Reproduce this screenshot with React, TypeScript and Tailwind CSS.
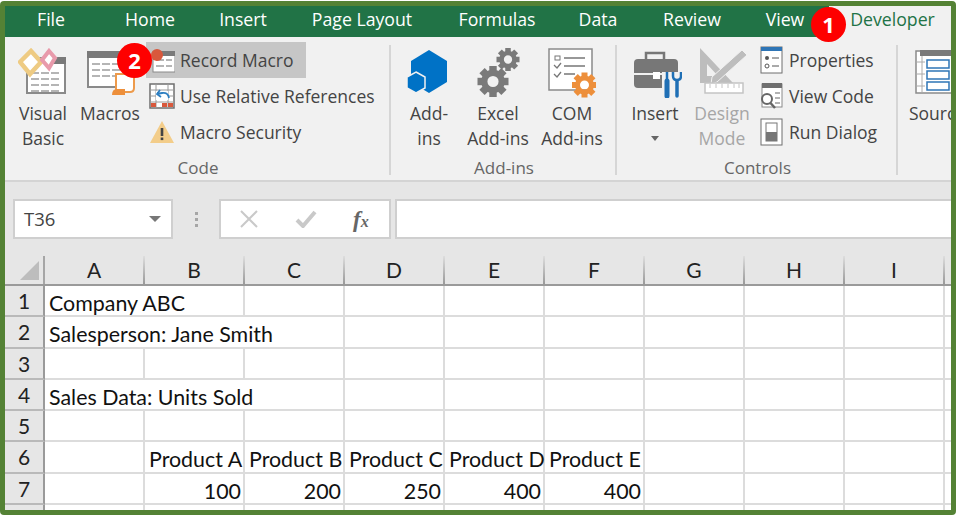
import React from "react";

const ribbonFont = { fontFamily: '"Open Sans", "Noto Sans", sans-serif' };

// tab labels with their box widths, so the centres line up with the ribbon
const tabs = [
  { label: "File", w: "w-[92px]" },
  { label: "Home", w: "w-[106px]" },
  { label: "Insert", w: "w-[80px]" },
  { label: "Page Layout", w: "w-[158px]" },
  { label: "Formulas", w: "w-[112px]" },
  { label: "Data", w: "w-[90px]" },
  { label: "Review", w: "w-[98px]" },
  { label: "View", w: "w-[88px]" },
];

function Badge({ n, className }: { n: number; className: string }) {
  return (
    <div
      className={`absolute z-10 flex h-[35px] w-[35px] items-center justify-center rounded-full bg-[#fe0000] text-[22px] font-bold text-white ${className}`}
    >
      {n}
    </div>
  );
}

function Gear({ cx, cy, r, color }: { cx: number; cy: number; r: number; color: string }) {
  const teeth = [0, 45, 90, 135, 180, 225, 270, 315];
  return (
    <g fill={color}>
      {teeth.map((a) => (
        <rect
          key={a}
          x={cx - r * 0.24}
          y={cy - r}
          width={r * 0.48}
          height={r * 0.5}
          transform={`rotate(${a} ${cx} ${cy})`}
        />
      ))}
      <circle cx={cx} cy={cy} r={r * 0.56} fill="none" stroke={color} strokeWidth={r * 0.4} />
    </g>
  );
}

function SheetLines({ x, y, w, rows }: { x: number; y: number; w: number; rows: number }) {
  return (
    <g stroke="#b5b5b5" strokeWidth="2" strokeDasharray="8 2">
      {Array.from({ length: rows }).map((_, i) => (
        <line key={i} x1={x} x2={x + w} y1={y + i * 6} y2={y + i * 6} />
      ))}
    </g>
  );
}

function VisualBasicIcon() {
  return (
    <svg width="50" height="48" viewBox="0 0 50 48">
      <rect x="9" y="10" width="38" height="35" fill="#fff" stroke="#8a8a8a" strokeWidth="2" />
      <rect x="28" y="9" width="20" height="7" fill="#7a7a7a" />
      <SheetLines x={13} y={25} w={30} rows={4} />
      <path d="M2 14 L13 3 L23 14 L12 26 Z" fill="#fff" stroke="#eecb83" strokeWidth="4.5" />
      <path d="M24 12 L31 3 L37 10 L31 20 Z" fill="#fff" stroke="#e89aab" strokeWidth="4" />
    </svg>
  );
}

function MacrosIcon() {
  return (
    <svg width="50" height="48" viewBox="0 0 50 48">
      <rect x="3" y="4" width="40" height="35" fill="#fff" stroke="#8a8a8a" strokeWidth="2" />
      <rect x="2" y="3" width="42" height="7" fill="#7a7a7a" />
      <SheetLines x={7} y={16} w={32} rows={3} />
      <path d="M31 44 H45 Q49 44 49 40 V26 H31 Z" fill="#fff" stroke="#ed9a4b" strokeWidth="2" />
      <path d="M27 47 Q27 41 32 41 H40 V47 Z" fill="#ed8f3b" />
    </svg>
  );
}

function RecordIcon() {
  return (
    <svg width="26" height="26" viewBox="0 0 26 26">
      <rect x="4" y="5" width="22" height="20" fill="#fff" stroke="#8a8a8a" />
      <rect x="4" y="4" width="22" height="5" fill="#7a7a7a" />
      <SheetLines x={7} y={13} w={16} rows={2} />
      <circle cx="8" cy="8" r="6" fill="#d9583c" />
    </svg>
  );
}

function RelativeIcon() {
  return (
    <svg width="26" height="26" viewBox="0 0 26 26">
      <rect x="1" y="1" width="24" height="24" fill="#fff" stroke="#6f6f6f" strokeWidth="1.5" />
      <path d="M1 7 H25 M1 13 H25 M1 19 H25 M7 1 V25 M19 1 V25" stroke="#9a9a9a" />
      <rect x="7" y="8" width="12" height="9" fill="#fff" />
      <rect x="2" y="20" width="5" height="4" fill="#d9583c" />
      <rect x="13" y="20" width="5" height="4" fill="#d9583c" />
      <rect x="19" y="20" width="5" height="4" fill="#d9583c" />
      <path d="M20 15 Q19 9 13 10 L8 11 M11 7 L8 11 L12 14" fill="none" stroke="#2e7fc1" strokeWidth="1.8" />
    </svg>
  );
}

function WarningIcon() {
  return (
    <svg width="26" height="26" viewBox="0 0 26 26">
      <path d="M13 2 L25 24 H1 Z" fill="#f3cd8a" />
      <rect x="11.7" y="9" width="2.6" height="8" fill="#444" />
      <rect x="11.7" y="18.5" width="2.6" height="2.6" fill="#444" />
    </svg>
  );
}

function AddInsIcon() {
  return (
    <svg width="46" height="48" viewBox="0 0 46 48">
      <path d="M23 2 L41 13 V34 L23 45 L5 34 V13 Z" fill="#0072c6" />
      <path d="M10 24 L19 29 V40 L10 45 L1 40 V29 Z" fill="#0072c6" stroke="#f1f1f1" strokeWidth="1.5" />
    </svg>
  );
}

function GearsIcon() {
  return (
    <svg width="50" height="50" viewBox="0 0 50 50">
      <Gear cx={20} cy={33.5} r={15.5} color="#7a7a7a" />
      <Gear cx={35} cy={11.5} r={11.5} color="#7a7a7a" />
    </svg>
  );
}

function ComIcon() {
  return (
    <svg width="48" height="50" viewBox="0 0 48 50">
      <rect x="1" y="1" width="43" height="41" fill="#fff" stroke="#8a8a8a" strokeWidth="1.5" />
      <rect x="7" y="8" width="5" height="4" fill="none" stroke="#777" />
      <path d="M16 10 H37 M16 18 H37 M16 26 H27" stroke="#777" strokeWidth="1.5" />
      <path d="M6 17 L9 20 L13 15 M6 26 L9 29 L13 24" fill="none" stroke="#777" strokeWidth="1.3" />
      <Gear cx={36.5} cy={37} r={12.5} color="#ed8f3b" />
    </svg>
  );
}

function ToolboxIcon() {
  return (
    <svg width="54" height="50" viewBox="0 0 54 50">
      <path d="M18 11 V5 H36 V11" fill="none" stroke="#777" strokeWidth="2.5" />
      <path d="M6 15 Q6 11 10 11 H46 Q50 11 50 15 V25 H6 Z" fill="#777" />
      <path d="M6 27 H50 V40 H10 Q6 40 6 36 Z" fill="#777" />
      <rect x="25" y="24" width="7" height="7" fill="#fff" />
      <rect x="34" y="24" width="20" height="26" fill="#f1f1f1" />
      <path d="M39 24 V35" stroke="#1f6fb5" strokeWidth="2.5" />
      <path d="M39 33 V48" stroke="#1f6fb5" strokeWidth="5" strokeLinecap="round" />
      <path d="M49 33 V48" stroke="#1f6fb5" strokeWidth="3.5" strokeLinecap="round" />
      <path d="M45 24 V28 Q45 32 49 32 Q53 32 53 28 V24" fill="none" stroke="#1f6fb5" strokeWidth="2.5" />
    </svg>
  );
}

function DesignIcon() {
  return (
    <svg width="50" height="48" viewBox="0 0 50 48">
      <path d="M3 0 L36 35 H3 Z M10 16 V28 H21 Z" fill="#bdbdbd" fillRule="evenodd" />
      <path d="M15 29 L45 2 L50 7 L20 34 L14 36 Z" fill="#bdbdbd" stroke="#f1f1f1" />
      <rect x="8" y="35" width="38" height="10" fill="#fff" stroke="#c4c4c4" strokeWidth="1.5" />
      <path d="M13 36 V40 M19 36 V40 M25 36 V40 M31 36 V40 M37 36 V40 M42 36 V40" stroke="#c4c4c4" />
    </svg>
  );
}

function PropertiesIcon() {
  return (
    <svg width="26" height="28" viewBox="0 0 26 28">
      <rect x="3" y="1" width="21" height="26" fill="#fff" stroke="#6f6f6f" />
      <rect x="3" y="1" width="21" height="4" fill="#2e75b6" />
      <circle cx="9" cy="12" r="2" fill="#555" />
      <circle cx="9" cy="20" r="2" fill="none" stroke="#555" />
      <path d="M14 12 H21 M14 20 H21" stroke="#555" />
    </svg>
  );
}

function ViewCodeIcon() {
  return (
    <svg width="26" height="28" viewBox="0 0 26 28">
      <rect x="4" y="2" width="20" height="23" fill="#fff" stroke="#8a8a8a" />
      <rect x="4" y="1" width="20" height="5" fill="#6f6f6f" />
      <path d="M17 11 H22 M17 16 H22 M17 21 H22" stroke="#666" />
      <circle cx="9" cy="17" r="5" fill="#fff" stroke="#666" strokeWidth="2" />
      <path d="M12.5 21 L17 26" stroke="#666" strokeWidth="2.5" />
    </svg>
  );
}

function RunDialogIcon() {
  return (
    <svg width="26" height="28" viewBox="0 0 26 28">
      <rect x="3" y="1" width="21" height="26" fill="#fff" stroke="#6f6f6f" />
      <rect x="8" y="5" width="11" height="18" fill="#fff" stroke="#777" />
      <rect x="8" y="14" width="11" height="9" fill="#777" />
    </svg>
  );
}

function SourceIcon() {
  return (
    <svg width="46" height="48" viewBox="0 0 46 48" className="shrink-0">
      <rect x="1" y="3" width="44" height="42" fill="#fff" stroke="#8a8a8a" strokeWidth="1.5" />
      <rect x="5" y="2" width="41" height="6" fill="#7a7a7a" />
      <path d="M1 14 H10 M1 26 H10 M1 38 H10 M7 8 V45" stroke="#aaa" />
      <rect x="12" y="12" width="22" height="8" fill="#fff" stroke="#2e75b6" strokeWidth="1.5" />
      <rect x="12" y="23" width="22" height="8" fill="#fff" stroke="#2e75b6" strokeWidth="1.5" />
      <rect x="12" y="34" width="22" height="8" fill="#fff" stroke="#2e75b6" strokeWidth="1.5" />
    </svg>
  );
}

function LargeButton({
  icon,
  lines,
  w,
  muted,
  caret,
}: {
  icon: React.ReactNode;
  lines: string[];
  w: string;
  muted?: boolean;
  caret?: boolean;
}) {
  return (
    <div className={`flex shrink-0 flex-col items-center ${w}`}>
      <div className="flex h-[59px] items-start pt-[6px]">{icon}</div>
      <div className={`whitespace-nowrap text-center leading-[25px] ${muted ? "text-[#a6a6a6]" : ""}`}>
        {lines.map((l) => (
          <div key={l}>{l}</div>
        ))}
        {caret && <div className="mx-auto mt-[10px] h-0 w-0 border-x-[4px] border-t-[5px] border-x-transparent border-t-[#666]" />}
      </div>
    </div>
  );
}

function SmallButton({
  icon,
  label,
  active,
  w,
}: {
  icon: React.ReactNode;
  label: string;
  active?: boolean;
  w?: string;
}) {
  return (
    <div className={`flex h-[36px] items-center gap-[5px] whitespace-nowrap pl-[3px] ${active ? "bg-[#c6c6c6]" : ""} ${w ?? ""}`}>
      {icon}
      <span className="pt-[1px]">{label}</span>
    </div>
  );
}

function Group({ w, label, children }: { w: string; label: string; children: React.ReactNode }) {
  return (
    <div className={`relative flex shrink-0 flex-col ${w}`}>
      <div className="flex h-[121px] items-start pt-[5px]">{children}</div>
      <div className="text-center text-[17px] leading-[24px] text-[#666]">{label}</div>
      <div className="absolute right-0 top-[8px] h-[130px] w-[2px] bg-[#d6d6d6]" />
    </div>
  );
}

const cols = ["A", "B", "C", "D", "E", "F", "G", "H", "I", ""];

// content per row: [column index, text, span, right aligned]
type Cell = { c: number; text: string; span?: number; right?: boolean };
const rows: { n: number | null; cells: Cell[] }[] = [
  { n: 1, cells: [{ c: 0, text: "Company ABC", span: 2 }] },
  { n: 2, cells: [{ c: 0, text: "Salesperson: Jane Smith", span: 3 }] },
  { n: 3, cells: [] },
  { n: 4, cells: [{ c: 0, text: "Sales Data: Units Sold", span: 3 }] },
  { n: 5, cells: [] },
  {
    n: 6,
    cells: [
      { c: 1, text: "Product A" },
      { c: 2, text: "Product B" },
      { c: 3, text: "Product C" },
      { c: 4, text: "Product D" },
      { c: 5, text: "Product E" },
    ],
  },
  {
    n: 7,
    cells: [
      { c: 1, text: "100", right: true },
      { c: 2, text: "200", right: true },
      { c: 3, text: "250", right: true },
      { c: 4, text: "400", right: true },
      { c: 5, text: "400", right: true },
    ],
  },
  // only the top few pixels of row 8 are on screen
  { n: null, cells: [] },
];

function SheetRow({ n, cells }: { n: number | null; cells: Cell[] }) {
  const out: React.ReactNode[] = [];
  let i = 0;
  while (i < cols.length) {
    const cell = cells.find((x) => x.c === i);
    const span = cell?.span ?? 1;
    out.push(
      <div
        key={i}
        style={{ width: span * 100 }}
        className={`h-full shrink-0 whitespace-nowrap border-b-2 border-r-2 border-[#dcdcdc] pl-[4px] pr-[2px] pt-[3px] text-[21.4px] leading-[28px] text-[#111] ${
          cell?.right ? "text-right" : ""
        }`}
      >
        {cell?.text}
      </div>
    );
    i += span;
  }
  return (
    <div className="flex h-[31.3px] shrink-0">
      <div className="flex h-full w-[40px] shrink-0 items-center justify-center border-b-2 border-r-2 border-b-[#b9b9b9] border-r-[#9a9a9a] bg-[#e6e6e6] text-[21px] text-[#222]">
        {n}
      </div>
      {out}
    </div>
  );
}

export default function App() {
  return (
    <div className="relative h-[515px] w-[956px] overflow-hidden bg-white pt-[1px]" style={ribbonFont}>
      <div className="flex h-full flex-col overflow-hidden rounded-[4px] border-[5px] border-[#548235] bg-white">
        {/* tabs */}
        <div className="flex h-[31px] shrink-0 bg-[#217346] text-[17.7px] text-white">
          {tabs.map((t) => (
            <div key={t.label} className={`flex items-center justify-center pb-[4px] ${t.w}`}>
              {t.label}
            </div>
          ))}
          <div className="flex flex-1 items-center justify-center bg-[#f1f1f1] pb-[4px] pl-[5px] text-[#217346]">Developer</div>
        </div>
        <Badge n={1} className="left-[811px] top-[7px]" />
        <Badge n={2} className="left-[117px] top-[43px]" />

        {/* ribbon */}
        <div className="flex h-[145px] shrink-0 overflow-hidden border-b-2 border-[#d4d4d4] bg-[#f1f1f1] text-[17.5px] text-[#444]">
          <Group w="w-[386px]" label="Code">
            <LargeButton w="w-[76px]" icon={<VisualBasicIcon />} lines={["Visual", "Basic"]} />
            <LargeButton w="w-[58px]" icon={<MacrosIcon />} lines={["Macros"]} />
            <div className="ml-[7px] flex flex-col">
              <SmallButton w="w-[160px]" active icon={<RecordIcon />} label="Record Macro" />
              <SmallButton icon={<RelativeIcon />} label="Use Relative References" />
              <SmallButton icon={<WarningIcon />} label="Macro Security" />
            </div>
          </Group>
          <Group w="w-[226px]" label="Add-ins">
            <LargeButton w="w-[76px]" icon={<AddInsIcon />} lines={["Add-", "ins"]} />
            <LargeButton w="w-[62px]" icon={<GearsIcon />} lines={["Excel", "Add-ins"]} />
            <LargeButton w="w-[86px]" icon={<ComIcon />} lines={["COM", "Add-ins"]} />
          </Group>
          <Group w="w-[281px]" label="Controls">
            <LargeButton w="w-[76px]" icon={<ToolboxIcon />} lines={["Insert"]} caret />
            <LargeButton w="w-[58px]" muted icon={<DesignIcon />} lines={["Design", "Mode"]} />
            <div className="ml-[4px] flex flex-col">
              <SmallButton icon={<PropertiesIcon />} label="Properties" />
              <SmallButton icon={<ViewCodeIcon />} label="View Code" />
              <SmallButton icon={<RunDialogIcon />} label="Run Dialog" />
            </div>
          </Group>
          <div className="flex flex-col pl-[11px] pt-[5px]">
            <div className="flex h-[59px] items-start pl-[6px] pt-[6px]">
              <SourceIcon />
            </div>
            <div className="leading-[25px]">Source</div>
          </div>
        </div>

        {/* formula bar */}
        <div className="flex h-[74px] shrink-0 items-center bg-[#e6e6e6] pl-[8px] text-[#444]">
          <div className="flex h-[40px] w-[160px] items-center justify-between border-2 border-[#cfcfcf] bg-white pl-[9px] pr-[10px] text-[18.5px]">
            T36
            <div className="h-0 w-0 border-x-[6px] border-t-[6px] border-x-transparent border-t-[#777]" />
          </div>
          <div className="flex w-[46px] flex-col items-center gap-[3px]">
            <div className="h-[3px] w-[3px] bg-[#a6a6a6]" />
            <div className="h-[3px] w-[3px] bg-[#a6a6a6]" />
            <div className="h-[3px] w-[3px] bg-[#a6a6a6]" />
          </div>
          <div className="flex h-[40px] w-[172px] items-center border-2 border-[#cfcfcf] bg-white">
            <svg width="18" height="18" viewBox="0 0 18 18" className="ml-[19px]" fill="none" stroke="#c9c9c9" strokeWidth="2">
              <path d="M1 1 L17 17 M17 1 L1 17" />
            </svg>
            <svg width="22" height="18" viewBox="0 0 22 18" className="ml-[37px]" fill="none" stroke="#c9c9c9" strokeWidth="4">
              <path d="M2 10 L8 16 L20 2" />
            </svg>
            <span className="ml-[36px] text-[23px] italic leading-none text-[#666]" style={{ fontFamily: '"Liberation Serif", serif' }}>
              <b>f</b>
              <b className="text-[16px]">x</b>
            </span>
          </div>
          <div className="ml-[4px] h-[40px] flex-1 border-2 border-r-0 border-[#cfcfcf] bg-white" />
        </div>

        {/* sheet */}
        <div className="flex-1 overflow-hidden" style={{ fontFamily: 'Lato, "Open Sans", sans-serif' }}>
          <div className="flex h-[30px] border-b-2 border-[#9a9a9a] bg-[#e6e6e6]">
            <div className="flex h-full w-[40px] shrink-0 items-end justify-end border-r-2 border-[#a6a6a6] pb-[4px] pr-[4px]">
              <div className="h-0 w-0 border-b-[19px] border-l-[19px] border-b-[#bdbdbd] border-l-transparent" />
            </div>
            {cols.map((c, i) => (
              <div key={i} className="flex h-full w-[100px] shrink-0 items-center text-[21px] text-[#222]">
                <div className="flex-1 text-center">{c}</div>
                <div className="h-full w-[2px] bg-gradient-to-b from-[#dedede] to-[#9a9a9a]" />
              </div>
            ))}
          </div>
          {rows.map((r, i) => (
            <SheetRow key={i} n={r.n} cells={r.cells} />
          ))}
        </div>
      </div>
    </div>
  );
}
